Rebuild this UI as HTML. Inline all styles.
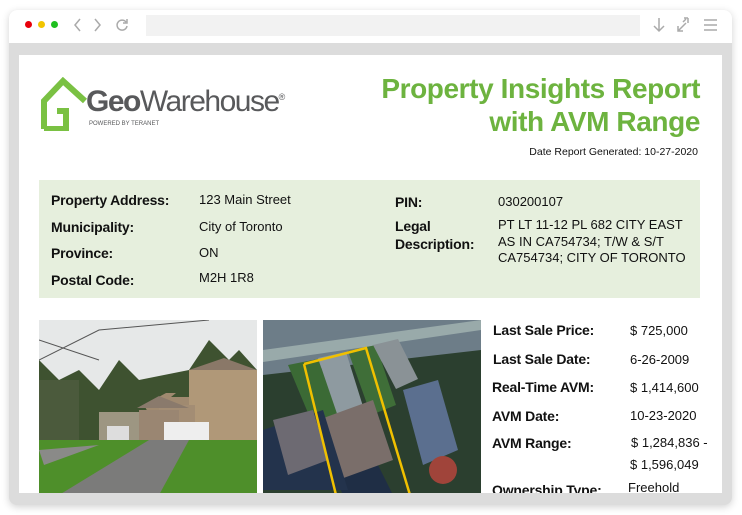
<!DOCTYPE html>
<html><head><style>
*{margin:0;padding:0;box-sizing:border-box}
body{width:742px;height:515px;background:#fff;font-family:"Liberation Sans",Arial,sans-serif;position:relative;overflow:hidden}
.frame{position:absolute;left:9px;top:10px;width:723px;height:495px;background:#dcdcdc;border-radius:8px;box-shadow:0 2px 8px rgba(0,0,0,.18)}
.bar{position:absolute;left:9px;top:10px;width:723px;height:33px;background:#fff;border-radius:8px 8px 0 0}
.dot{position:absolute;top:21px;width:7px;height:7px;border-radius:50%}
.url{position:absolute;left:146px;top:15px;width:494px;height:21px;background:#f2f2f2}
.page{position:absolute;left:19px;top:55px;width:703px;height:438px;background:#fff;overflow:hidden}
.abs{position:absolute}
.g{color:#6db33f;font-weight:bold;font-size:28px;letter-spacing:-0.4px;text-align:right;line-height:33px}
.box{position:absolute;left:20px;top:125px;width:661px;height:118px;background:#e6efdd}
.l{font-weight:bold;font-size:14px;color:#111;letter-spacing:-0.2px}
.v{font-size:13px;color:#111}
</style></head><body>
<div class="frame"></div>
<div class="bar"></div>
<div class="dot" style="left:25px;background:#e8000b"></div>
<div class="dot" style="left:38px;background:#f2c500"></div>
<div class="dot" style="left:51px;background:#1fbf1f"></div>
<svg class="abs" style="left:72px;top:17px" width="60" height="16" fill="none" stroke="#aaa" stroke-width="1.5"><path d="M8 2L3 8l5 6M23 2l5 6-5 6"/><path d="M54 5a5 5 0 1 0 1 4M55 2v4h-4"/></svg>
<div class="url"></div>
<svg class="abs" style="left:650px;top:16px" width="70" height="18" fill="none" stroke="#aaa" stroke-width="1.5"><path d="M9 2v13M4 10l5 5 5-5"/><path d="M28 15l8-8M28 10v5h5M36 3l-3 3M38 2v5M38 2h-4"/><path d="M54 4h13M54 9h13M54 14h13"/></svg>
<div class="page">
<svg class="abs" style="left:22px;top:22px" width="50" height="54"><path d="M3 52V24L22 4l22 20M3 52h22V34h-9" fill="none" stroke="#7ac143" stroke-width="6"/></svg>
<div class="abs" style="left:67px;top:30px;font-size:30px;color:#58595b;letter-spacing:-1.5px"><b>Geo</b>Warehouse<sup style="font-size:9px">®</sup></div>
<div class="abs" style="left:70px;top:66px;font-size:6px;color:#58595b">POWERED BY TERANET</div>
<div class="abs g" style="right:22px;top:17px">Property Insights Report<br>with AVM Range</div>
<div class="abs" style="right:24px;top:91px;font-size:10.5px;color:#111">Date Report Generated: 10-27-2020</div>
<div class="box">
<div class="abs l" style="left:12px;top:12px">Property Address:</div><div class="abs v" style="left:160px;top:12px">123 Main Street</div>
<div class="abs l" style="left:12px;top:39px">Municipality:</div><div class="abs v" style="left:160px;top:39px">City of Toronto</div>
<div class="abs l" style="left:12px;top:65px">Province:</div><div class="abs v" style="left:160px;top:65px">ON</div>
<div class="abs l" style="left:12px;top:92px">Postal Code:</div><div class="abs v" style="left:160px;top:90px">M2H 1R8</div>
<div class="abs l" style="left:356px;top:14px">PIN:</div><div class="abs v" style="left:459px;top:14px">030200107</div>
<div class="abs l" style="left:356px;top:37px;line-height:18px">Legal<br>Description:</div>
<div class="abs v" style="left:459px;top:37px;line-height:16.5px">PT LT 11-12 PL 682 CITY EAST<br>AS IN CA754734; T/W &amp; S/T<br>CA754734; CITY OF TORONTO</div>
</div>
<svg class="abs" style="left:20px;top:265px" width="218" height="175">
<rect width="218" height="175" fill="#e6e8e8"/>
<path d="M0 40L20 60 40 50 60 70 80 40 100 60 150 50 170 20 190 40 200 30 218 50V120H0z" fill="#3e5230"/>
<path d="M0 60h40v60H0z" fill="#4b5a3c"/>
<path d="M105 85l22-12h10l-5 4h50v35H120z" fill="#a08a70"/>
<rect x="150" y="50" width="68" height="70" fill="#b09878"/>
<path d="M150 50l35-12 33 12z" fill="#8a7868"/>
<rect x="120" y="85" width="36" height="35" fill="#a38d74"/>
<rect x="100" y="90" width="40" height="32" fill="#9a8672"/>
<path d="M98 88l22-12 30 12z" fill="#8a7a6c"/>
<rect x="125" y="102" width="45" height="20" fill="#eee"/>
<rect x="60" y="92" width="40" height="30" fill="#9d9682"/>
<rect x="68" y="106" width="22" height="16" fill="#ddd"/>
<path d="M0 120h218v55H0z" fill="#4e8f2a"/>
<path d="M20 175L110 120h40l-30 55z" fill="#7b7b7a"/>
<path d="M0 130l60-5 -55 20z" fill="#8a8a88"/>
<path d="M0 40L60 10 170 0M0 20l60 20" stroke="#555" fill="none"/>
</svg>
<svg class="abs" style="left:244px;top:265px" width="218" height="175">
<rect width="218" height="175" fill="#2b3f2f"/>
<path d="M0 0h218v30L0 55z" fill="#6d7d88"/>
<path d="M0 30L218 0v10L0 42z" fill="#9aa"/>
<path d="M25 45l30-6 30 80-25 10z" fill="#3b6a35"/>
<path d="M55 38l28-6 25 80-25 8z" fill="#8e9aa0"/>
<path d="M85 31l28-6 20 60-25 10z" fill="#3f6e38"/>
<path d="M110 25l25-6 20 40-22 10z" fill="#8a9296"/>
<path d="M60 130l40-15 30 60H80z" fill="#1f2e45"/>
<path d="M55 100l55-20 20 60-55 20z" fill="#7a6e6a"/>
<path d="M0 110l60-20 25 80H0z" fill="#23334c"/>
<path d="M10 100l40-10 15 50-40 15z" fill="#6d6a72"/>
<path d="M140 70l35-10 20 70-35 15z" fill="#5b6f8f"/>
<circle cx="180" cy="150" r="14" fill="#a0443a"/>
<path d="M41 44L103 28l44 147M41 44l32 131" fill="none" stroke="#f0c000" stroke-width="2.5"/>
</svg>
<div class="abs l" style="left:474px;top:267px">Last Sale Price:</div><div class="abs v" style="left:611px;top:268px">$ 725,000</div>
<div class="abs l" style="left:474px;top:296px">Last Sale Date:</div><div class="abs v" style="left:611px;top:297px">6-26-2009</div>
<div class="abs l" style="left:473px;top:324px">Real-Time AVM:</div><div class="abs v" style="left:611px;top:325px">$ 1,414,600</div>
<div class="abs l" style="left:473px;top:353px">AVM Date:</div><div class="abs v" style="left:611px;top:353px">10-23-2020</div>
<div class="abs l" style="left:473px;top:380px">AVM Range:</div><div class="abs v" style="left:612px;top:380px">$ 1,284,836 -</div>
<div class="abs v" style="left:611px;top:402px">$ 1,596,049</div>
<div class="abs l" style="left:473px;top:427px">Ownership Type:</div><div class="abs v" style="left:609px;top:425px">Freehold</div>
</div>
</body></html>
